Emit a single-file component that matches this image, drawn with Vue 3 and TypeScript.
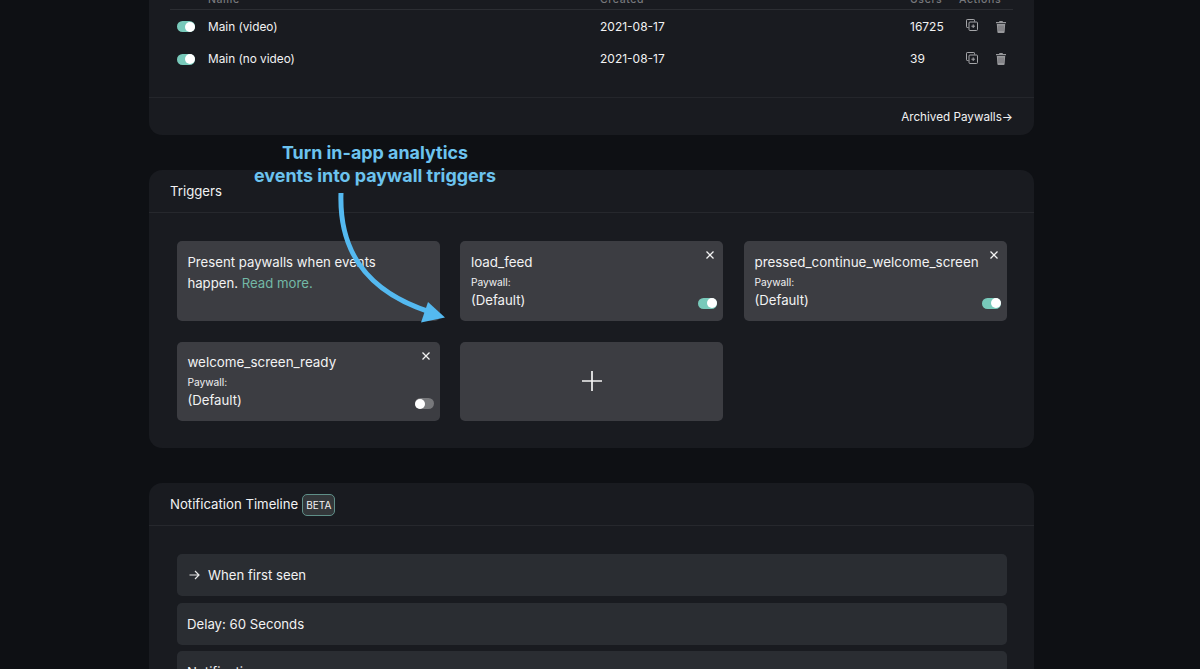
<script setup lang="ts">
interface Paywall { name: string; created: string; users: string }
interface Trigger { name: string; on: boolean }

const paywalls: Paywall[] = [
  { name: 'Main (video)', created: '2021-08-17', users: '16725' },
  { name: 'Main (no video)', created: '2021-08-17', users: '39' },
]
const triggers: Trigger[] = [
  { name: 'load_feed', on: true },
  { name: 'pressed_continue_welcome_screen', on: true },
  { name: 'welcome_screen_ready', on: false },
]
</script>

<template>
  <div class="page">
    <section class="card card-paywalls">
      <div class="table">
        <div class="row head">
          <span></span>
          <span>Name</span>
          <span>Created</span>
          <span>Users</span>
          <span>Actions</span>
        </div>
        <div v-for="p in paywalls" :key="p.name" class="row">
          <span class="toggle on row-toggle"><i></i></span>
          <span class="cell-name">{{ p.name }}</span>
          <span>{{ p.created }}</span>
          <span>{{ p.users }}</span>
          <span class="actions">
            <svg class="copy" width="12" height="12" viewBox="0 0 12 12" fill="none" stroke="#a5a6a9" stroke-width="1">
              <path d="M2.5 8.5H1.2a.7.7 0 0 1-.7-.7V1.2a.7.7 0 0 1 .7-.7h6.6a.7.7 0 0 1 .7.7v1.3" />
              <rect x="3" y="3" width="8.5" height="8.5" rx="1" />
              <path d="M7.2 5.4v3.6M5.4 7.2h3.6" />
            </svg>
            <svg class="trash" width="10" height="12" viewBox="0 0 10 12" fill="#97989b">
              <path d="M3.5 0h3l.5 1h3v1.2H0V1h3zM.8 3h8.4l-.6 8.2a.9.9 0 0 1-.9.8H2.300a.9.9 0 0 1-.9-.8z" />
              <path d="M3 4.500v5.500M5 4.500v5.500M7 4.500v5.500" stroke="#55565a" stroke-width=".6" />
            </svg>
          </span>
        </div>
      </div>
      <div class="foot"><span>Archived Paywalls</span><span class="foot-arrow">→</span></div>
    </section>

    <section class="card">
      <header class="card-head">Triggers</header>
      <div class="tiles">
        <div class="tile intro">
          Present paywalls when events happen. <a class="link">Read more.</a>
        </div>
        <div v-for="t in triggers" :key="t.name" class="tile">
          <svg class="close" width="8" height="8" viewBox="0 0 8 8" stroke="#f2f2f2" stroke-width="1.300">
            <path d="M.5.500l7 7M7.500.500l-7 7" />
          </svg>
          <div class="tile-title">{{ t.name }}</div>
          <div class="tile-label">Paywall:</div>
          <div class="tile-value">(Default)</div>
          <span class="toggle tile-toggle" :class="{ on: t.on }"><i></i></span>
        </div>
        <div class="tile add">
          <svg width="22" height="22" viewBox="0 0 22 22" stroke="#f4f4f4" stroke-width="1.700">
            <path d="M11 1v20M1 11h20" />
          </svg>
        </div>
      </div>
    </section>

    <section class="card">
      <header class="card-head">Notification Timeline <span class="badge">BETA</span></header>
      <div class="timeline">
        <div class="step">
          <svg class="step-arrow" width="11" height="10" viewBox="0 0 11 10" fill="none" stroke="#e8e8e8" stroke-width="1.200">
            <path d="M.5 5h9.500M6 1l4 4-4 4" />
          </svg>
          When first seen
        </div>
        <div class="step">Delay: 60 Seconds</div>
        <div class="step">Notification</div>
      </div>
    </section>

    <div class="callout">Turn in-app analytics<br />events into paywall triggers</div>
    <svg class="callout-arrow" width="1200" height="669" viewBox="0 0 1200 669" fill="none">
      <path d="M341 193C339 250 365 291 430 312" stroke="#54b9f0" stroke-width="5" />
      <path d="M445 317.500L428 302L421 322.500Z" fill="#54b9f0" />
    </svg>
  </div>
</template>

<style scoped>
.page {
  position: relative;
  height: 669px;
  overflow: hidden;
  box-sizing: border-box;
  padding-left: 149px;
  display: flex;
  flex-direction: column;
  gap: 35px;
  background: #0e1014;
  color: #f2f2f3;
  font-family: Inter, "Liberation Sans", sans-serif;
  font-size: 13.200px;
}
.card {
  width: 885px;
  flex: none;
  border-radius: 13px;
  background: #191b20;
}
.card-paywalls {
  margin-top: -30px;
  height: 165px;
  border-radius: 0 0 13px 13px;
  display: flex;
  flex-direction: column;
}
.table {
  margin: 0 21px;
  padding-top: 10px;
  height: 127px;
  box-sizing: border-box;
  flex: none;
}
.row {
  display: grid;
  grid-template-columns: 38px 392px 310px 49px 55px;
  height: 32.500px;
  padding-top: 1.300px;
  box-sizing: border-box;
  align-items: center;
  font-size: 12px;
  line-height: 16px;
}
.cell-name { font-size: 11.800px; }
.head {
  height: 30px;
  padding-top: 0;
  align-items: end;
  padding-bottom: 3px;
  border-bottom: 1px solid #2c2e33;
  font-size: 10.500px;
  line-height: 13px;
  font-weight: 500;
  letter-spacing: 0.6px;
  color: #77787c;
}
.row-toggle { margin-left: 7px; }
.actions {
  display: flex;
  align-items: center;
  gap: 18px;
  padding-left: 7px;
}
.copy { margin-top: -3px; }
.foot {
  flex: 1;
  display: flex;
  justify-content: flex-end;
  align-items: center;
  padding-right: 21px;
  border-top: 1px solid #24262b;
  font-size: 11.700px;
}
.foot-arrow { margin-left: 0; }
.toggle {
  display: flex;
  justify-content: flex-start;
  align-items: center;
  box-sizing: border-box;
  width: 18px;
  height: 11px;
  padding: 0.500px;
  border-radius: 6px;
  background: #77787b;
}
.toggle i {
  width: 10px;
  height: 10px;
  border-radius: 50%;
  background: #fff;
}
.toggle.on {
  justify-content: flex-end;
  background: #78c9ba;
}
.card-head {
  display: flex;
  align-items: center;
  gap: 4px;
  height: 42px;
  padding-left: 21px;
  border-bottom: 1px solid #26282d;
}
.tiles {
  display: grid;
  grid-template-columns: repeat(3, 1fr);
  grid-auto-rows: 79.500px;
  gap: 21px 20.500px;
  padding: 28px 27px 27px 27.900px;
}
.tile {
  position: relative;
  box-sizing: border-box;
  padding: 10.600px 10.500px;
  border-radius: 5px;
  background: #3c3d42;
}
.intro { line-height: 21px; padding-right: 50px; }
.link { color: #73b8a6; }
.close { position: absolute; top: 10px; right: 9.500px; }
.tile-title { line-height: 20px; font-size: 13.400px; }
.tile-label { margin-top: 2px; font-size: 10.200px; line-height: 16px; }
.tile-value { line-height: 20px; }
.tile-toggle { position: absolute; right: 6px; bottom: 12px; width: 19px; }
.add {
  display: flex;
  align-items: center;
  justify-content: center;
}
.badge {
  box-sizing: border-box;
  height: 22px;
  margin-top: 2px;
  padding: 0 3px;
  display: flex;
  align-items: center;
  border: 1px solid #5f8f88;
  border-radius: 5px;
  background: #33373a;
  font-size: 10px;
}
.timeline {
  display: flex;
  flex-direction: column;
  gap: 6.500px;
  padding: 28px 27px 28px 28px;
}
.step {
  flex: none;
  display: flex;
  align-items: center;
  height: 42px;
  padding-left: 10px;
  border-radius: 5px;
  background: #2a2d32;
}
.step-arrow { margin: 0 8px 0 2px; }
.callout {
  position: absolute;
  left: 225px;
  top: 141px;
  width: 300px;
  text-align: center;
  font-size: 17.900px;
  line-height: 23px;
  font-weight: 650;
  color: #6cc3ef;
}
.callout-arrow {
  position: absolute;
  left: 0;
  top: 0;
  pointer-events: none;
}
</style>
